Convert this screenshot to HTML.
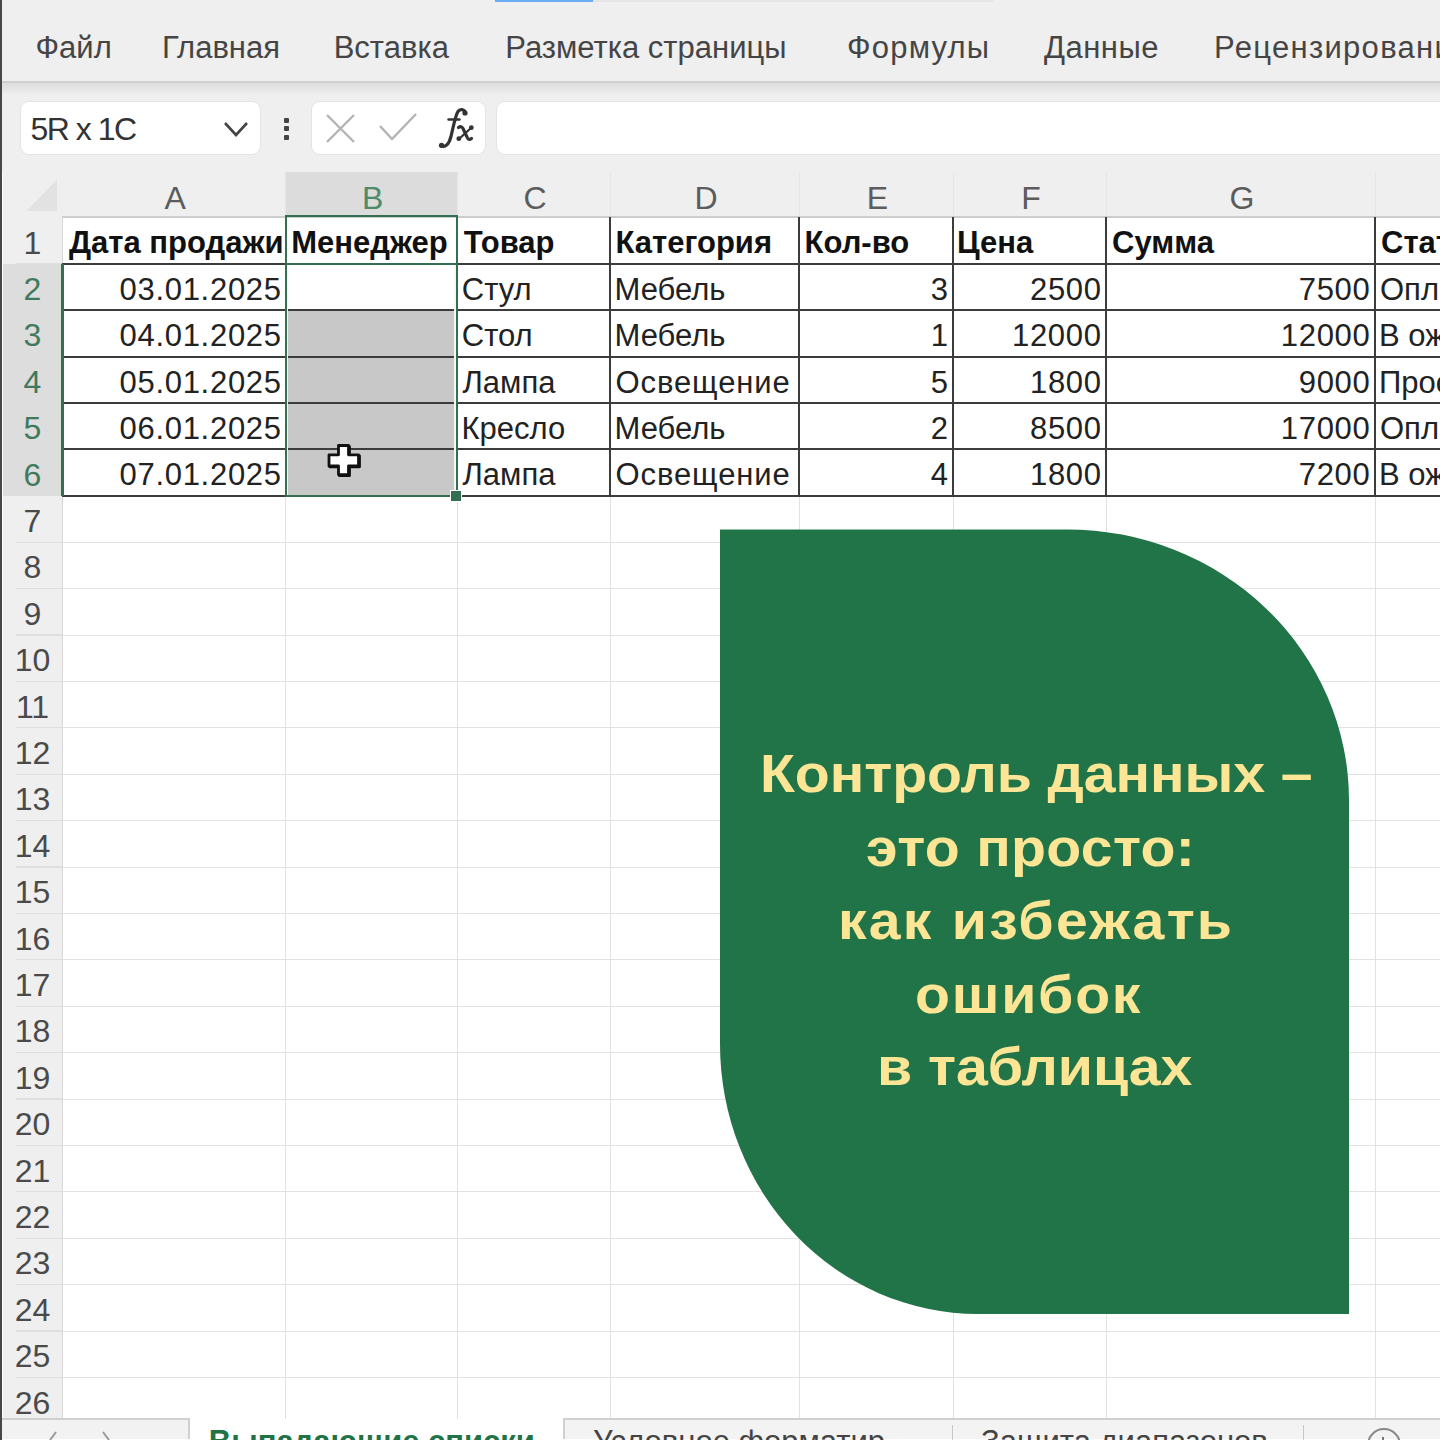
<!DOCTYPE html><html><head><meta charset="utf-8"><style>
*{margin:0;padding:0;box-sizing:border-box}
html,body{width:1440px;height:1440px;overflow:hidden;background:#fff;font-family:"Liberation Sans", sans-serif}
.a{position:absolute}
.t{position:absolute;white-space:nowrap;line-height:1}
</style></head><body>
<div class="a" style="left:0;top:0;width:1440px;height:172px;background:#efefef"></div>
<div class="a" style="left:593px;top:0;width:400px;height:2.2px;background:#e5e5e5"></div>
<div class="a" style="left:495px;top:0;width:98px;height:2.4px;background:#68adf5"></div>
<div class="a" style="left:0;top:81px;width:1440px;height:2px;background:#d0d0d0"></div>
<div class="a" style="left:0;top:83px;width:1440px;height:12px;background:linear-gradient(#dcdcdc,#efefef)"></div>
<div class="t" style="left:35.50px;top:31.95px;font-size:31px;font-weight:400;color:#454545;letter-spacing:0px;">Файл</div>
<div class="t" style="left:162.00px;top:31.95px;font-size:31px;font-weight:400;color:#454545;letter-spacing:0px;">Главная</div>
<div class="t" style="left:333.70px;top:31.95px;font-size:31px;font-weight:400;color:#454545;letter-spacing:0px;">Вставка</div>
<div class="t" style="left:505.30px;top:31.95px;font-size:31px;font-weight:400;color:#454545;letter-spacing:0px;">Разметка страницы</div>
<div class="t" style="left:847.00px;top:31.95px;font-size:31px;font-weight:400;color:#454545;letter-spacing:1.2px;">Формулы</div>
<div class="t" style="left:1044.00px;top:31.95px;font-size:31px;font-weight:400;color:#454545;letter-spacing:0.5px;">Данные</div>
<div class="t" style="left:1214.10px;top:31.95px;font-size:31px;font-weight:400;color:#454545;letter-spacing:1.3px;">Рецензирование</div>
<div class="a" style="left:21px;top:102px;width:239px;height:52px;background:#fff;border-radius:8px;box-shadow:0 0 0 1px #e4e4e4"></div>
<div class="t" style="left:30.50px;top:113.31px;font-size:32px;font-weight:400;color:#333;letter-spacing:-1.5px;">5R x 1C</div>
<svg class="a" style="left:220px;top:115px" width="32" height="28"><path d="M5 8 L16 20 L27 8" fill="none" stroke="#444" stroke-width="2.6"/></svg>
<div class="a" style="left:284px;top:117.5px;width:5px;height:5px;background:#444;border-radius:1px"></div>
<div class="a" style="left:284px;top:126.0px;width:5px;height:5px;background:#444;border-radius:1px"></div>
<div class="a" style="left:284px;top:134.5px;width:5px;height:5px;background:#444;border-radius:1px"></div>
<div class="a" style="left:312px;top:102px;width:173px;height:52px;background:#fff;border-radius:8px;box-shadow:0 0 0 1px #e4e4e4"></div>
<svg class="a" style="left:320px;top:108px" width="160" height="44"><path d="M7 7 L34 34 M34 7 L7 34" stroke="#b4b4b4" stroke-width="2.4" fill="none"/><path d="M60 18 L72 31 L96 6" stroke="#b4b4b4" stroke-width="2.4" fill="none"/></svg>
<svg class="a" style="left:430px;top:100px" width="56" height="54"><g fill="none" stroke="#333" stroke-linecap="round"><path d="M35.5 12.5 C34 9 30 8.5 28 11.5 C25.5 15 23 28 21 36.5 C19 44 16 47.5 11 46" stroke-width="3.2"/><path d="M18.5 19.5 H29.5" stroke-width="2.4"/><path d="M28.5 27.5 C30.5 26 32 26.5 33 28.5 L37 37 C38 39.5 39.5 40 41.5 38.5" stroke-width="3.2"/><path d="M41.5 27.5 L29 39" stroke-width="2.2"/></g><g fill="#333"><circle cx="35" cy="13" r="2.6"/><circle cx="11.5" cy="45.3" r="2.6"/><circle cx="41.3" cy="27.7" r="2.4"/><circle cx="28.8" cy="38.7" r="2.4"/></g></svg>
<div class="a" style="left:497px;top:102px;width:980px;height:52px;background:#fff;border-radius:8px;box-shadow:0 0 0 1px #e4e4e4"></div>
<div class="a" style="left:3px;top:172px;width:1437px;height:45.4px;background:#efefef"></div>
<div class="a" style="left:3px;top:217px;width:59.5px;height:1223px;background:#efefef"></div>
<div class="a" style="left:285.5px;top:172px;width:171.5px;height:45px;background:#dcdcdc"></div>
<div class="a" style="left:3px;top:263.8px;width:59.5px;height:232.0px;background:#dddddd"></div>
<svg class="a" style="left:20px;top:178px" width="40" height="36"><path d="M37 1.5 L37 33 L6.5 33 Z" fill="#e2e2e2"/></svg>
<div class="a" style="left:285.0px;top:172px;width:1px;height:45px;background:#e6e6e6"></div>
<div class="a" style="left:456.5px;top:172px;width:1px;height:45px;background:#e6e6e6"></div>
<div class="a" style="left:609.5px;top:172px;width:1px;height:45px;background:#e6e6e6"></div>
<div class="a" style="left:798.5px;top:172px;width:1px;height:45px;background:#e6e6e6"></div>
<div class="a" style="left:952.5px;top:172px;width:1px;height:45px;background:#e6e6e6"></div>
<div class="a" style="left:1105.5px;top:172px;width:1px;height:45px;background:#e6e6e6"></div>
<div class="a" style="left:1374.5px;top:172px;width:1px;height:45px;background:#e6e6e6"></div>
<div class="a" style="left:62px;top:216.2px;width:1378px;height:1.8px;background:#cdcdcd"></div>
<div class="a" style="left:61.5px;top:217px;width:1.5px;height:1223px;background:#d6d6d6"></div>
<div class="a" style="left:62px;top:263.3px;width:1378px;height:1px;background:#e2e2e2"></div>
<div class="a" style="left:16px;top:263.2px;width:46px;height:1.2px;background:#dedede"></div>
<div class="a" style="left:62px;top:309.7px;width:1378px;height:1px;background:#e2e2e2"></div>
<div class="a" style="left:16px;top:309.59999999999997px;width:46px;height:1.2px;background:#dedede"></div>
<div class="a" style="left:62px;top:356.1px;width:1378px;height:1px;background:#e2e2e2"></div>
<div class="a" style="left:16px;top:356.0px;width:46px;height:1.2px;background:#dedede"></div>
<div class="a" style="left:62px;top:402.5px;width:1378px;height:1px;background:#e2e2e2"></div>
<div class="a" style="left:16px;top:402.4px;width:46px;height:1.2px;background:#dedede"></div>
<div class="a" style="left:62px;top:448.9px;width:1378px;height:1px;background:#e2e2e2"></div>
<div class="a" style="left:16px;top:448.79999999999995px;width:46px;height:1.2px;background:#dedede"></div>
<div class="a" style="left:62px;top:495.29999999999995px;width:1378px;height:1px;background:#e2e2e2"></div>
<div class="a" style="left:16px;top:495.19999999999993px;width:46px;height:1.2px;background:#dedede"></div>
<div class="a" style="left:62px;top:541.7px;width:1378px;height:1px;background:#e2e2e2"></div>
<div class="a" style="left:16px;top:541.6px;width:46px;height:1.2px;background:#dedede"></div>
<div class="a" style="left:62px;top:588.1px;width:1378px;height:1px;background:#e2e2e2"></div>
<div class="a" style="left:16px;top:588.0px;width:46px;height:1.2px;background:#dedede"></div>
<div class="a" style="left:62px;top:634.5px;width:1378px;height:1px;background:#e2e2e2"></div>
<div class="a" style="left:16px;top:634.4px;width:46px;height:1.2px;background:#dedede"></div>
<div class="a" style="left:62px;top:680.9px;width:1378px;height:1px;background:#e2e2e2"></div>
<div class="a" style="left:16px;top:680.8px;width:46px;height:1.2px;background:#dedede"></div>
<div class="a" style="left:62px;top:727.3px;width:1378px;height:1px;background:#e2e2e2"></div>
<div class="a" style="left:16px;top:727.1999999999999px;width:46px;height:1.2px;background:#dedede"></div>
<div class="a" style="left:62px;top:773.6999999999999px;width:1378px;height:1px;background:#e2e2e2"></div>
<div class="a" style="left:16px;top:773.5999999999999px;width:46px;height:1.2px;background:#dedede"></div>
<div class="a" style="left:62px;top:820.0999999999999px;width:1378px;height:1px;background:#e2e2e2"></div>
<div class="a" style="left:16px;top:819.9999999999999px;width:46px;height:1.2px;background:#dedede"></div>
<div class="a" style="left:62px;top:866.5px;width:1378px;height:1px;background:#e2e2e2"></div>
<div class="a" style="left:16px;top:866.4px;width:46px;height:1.2px;background:#dedede"></div>
<div class="a" style="left:62px;top:912.9px;width:1378px;height:1px;background:#e2e2e2"></div>
<div class="a" style="left:16px;top:912.8px;width:46px;height:1.2px;background:#dedede"></div>
<div class="a" style="left:62px;top:959.3px;width:1378px;height:1px;background:#e2e2e2"></div>
<div class="a" style="left:16px;top:959.1999999999999px;width:46px;height:1.2px;background:#dedede"></div>
<div class="a" style="left:62px;top:1005.6999999999999px;width:1378px;height:1px;background:#e2e2e2"></div>
<div class="a" style="left:16px;top:1005.5999999999999px;width:46px;height:1.2px;background:#dedede"></div>
<div class="a" style="left:62px;top:1052.1px;width:1378px;height:1px;background:#e2e2e2"></div>
<div class="a" style="left:16px;top:1052.0px;width:46px;height:1.2px;background:#dedede"></div>
<div class="a" style="left:62px;top:1098.5px;width:1378px;height:1px;background:#e2e2e2"></div>
<div class="a" style="left:16px;top:1098.4px;width:46px;height:1.2px;background:#dedede"></div>
<div class="a" style="left:62px;top:1144.9px;width:1378px;height:1px;background:#e2e2e2"></div>
<div class="a" style="left:16px;top:1144.8000000000002px;width:46px;height:1.2px;background:#dedede"></div>
<div class="a" style="left:62px;top:1191.3px;width:1378px;height:1px;background:#e2e2e2"></div>
<div class="a" style="left:16px;top:1191.2px;width:46px;height:1.2px;background:#dedede"></div>
<div class="a" style="left:62px;top:1237.7px;width:1378px;height:1px;background:#e2e2e2"></div>
<div class="a" style="left:16px;top:1237.6000000000001px;width:46px;height:1.2px;background:#dedede"></div>
<div class="a" style="left:62px;top:1284.1000000000001px;width:1378px;height:1px;background:#e2e2e2"></div>
<div class="a" style="left:16px;top:1284.0000000000002px;width:46px;height:1.2px;background:#dedede"></div>
<div class="a" style="left:62px;top:1330.5px;width:1378px;height:1px;background:#e2e2e2"></div>
<div class="a" style="left:16px;top:1330.4px;width:46px;height:1.2px;background:#dedede"></div>
<div class="a" style="left:62px;top:1376.9px;width:1378px;height:1px;background:#e2e2e2"></div>
<div class="a" style="left:16px;top:1376.8000000000002px;width:46px;height:1.2px;background:#dedede"></div>
<div class="a" style="left:62px;top:1423.3px;width:1378px;height:1px;background:#e2e2e2"></div>
<div class="a" style="left:16px;top:1423.2px;width:46px;height:1.2px;background:#dedede"></div>
<div class="a" style="left:285.0px;top:217px;width:1px;height:1223px;background:#e2e2e2"></div>
<div class="a" style="left:456.5px;top:217px;width:1px;height:1223px;background:#e2e2e2"></div>
<div class="a" style="left:609.5px;top:217px;width:1px;height:1223px;background:#e2e2e2"></div>
<div class="a" style="left:798.5px;top:217px;width:1px;height:1223px;background:#e2e2e2"></div>
<div class="a" style="left:952.5px;top:217px;width:1px;height:1223px;background:#e2e2e2"></div>
<div class="a" style="left:1105.5px;top:217px;width:1px;height:1223px;background:#e2e2e2"></div>
<div class="a" style="left:1374.5px;top:217px;width:1px;height:1223px;background:#e2e2e2"></div>
<div class="t" style="left:63.5px;width:223.5px;text-align:center;top:182.41px;font-size:32px;color:#5c5c5c">A</div>
<div class="t" style="left:287.0px;width:171.5px;text-align:center;top:182.41px;font-size:32px;color:#4f8a6a">B</div>
<div class="t" style="left:458.5px;width:153px;text-align:center;top:182.41px;font-size:32px;color:#5c5c5c">C</div>
<div class="t" style="left:611.5px;width:189px;text-align:center;top:182.41px;font-size:32px;color:#5c5c5c">D</div>
<div class="t" style="left:800.5px;width:154px;text-align:center;top:182.41px;font-size:32px;color:#5c5c5c">E</div>
<div class="t" style="left:954.5px;width:153px;text-align:center;top:182.41px;font-size:32px;color:#5c5c5c">F</div>
<div class="t" style="left:1107.5px;width:269px;text-align:center;top:182.41px;font-size:32px;color:#5c5c5c">G</div>
<div class="t" style="left:1376.5px;width:225px;text-align:center;top:182.41px;font-size:32px;color:#5c5c5c">H</div>
<div class="t" style="left:3px;width:59px;text-align:center;top:226.51px;font-size:32px;color:#4a4a4a">1</div>
<div class="t" style="left:3px;width:59px;text-align:center;top:272.91px;font-size:32px;color:#3f7a5c">2</div>
<div class="t" style="left:3px;width:59px;text-align:center;top:319.31px;font-size:32px;color:#3f7a5c">3</div>
<div class="t" style="left:3px;width:59px;text-align:center;top:365.71px;font-size:32px;color:#3f7a5c">4</div>
<div class="t" style="left:3px;width:59px;text-align:center;top:412.11px;font-size:32px;color:#3f7a5c">5</div>
<div class="t" style="left:3px;width:59px;text-align:center;top:458.51px;font-size:32px;color:#3f7a5c">6</div>
<div class="t" style="left:3px;width:59px;text-align:center;top:504.91px;font-size:32px;color:#4a4a4a">7</div>
<div class="t" style="left:3px;width:59px;text-align:center;top:551.31px;font-size:32px;color:#4a4a4a">8</div>
<div class="t" style="left:3px;width:59px;text-align:center;top:597.71px;font-size:32px;color:#4a4a4a">9</div>
<div class="t" style="left:3px;width:59px;text-align:center;top:644.11px;font-size:32px;color:#4a4a4a">10</div>
<div class="t" style="left:3px;width:59px;text-align:center;top:690.51px;font-size:32px;color:#4a4a4a">11</div>
<div class="t" style="left:3px;width:59px;text-align:center;top:736.91px;font-size:32px;color:#4a4a4a">12</div>
<div class="t" style="left:3px;width:59px;text-align:center;top:783.31px;font-size:32px;color:#4a4a4a">13</div>
<div class="t" style="left:3px;width:59px;text-align:center;top:829.71px;font-size:32px;color:#4a4a4a">14</div>
<div class="t" style="left:3px;width:59px;text-align:center;top:876.11px;font-size:32px;color:#4a4a4a">15</div>
<div class="t" style="left:3px;width:59px;text-align:center;top:922.51px;font-size:32px;color:#4a4a4a">16</div>
<div class="t" style="left:3px;width:59px;text-align:center;top:968.91px;font-size:32px;color:#4a4a4a">17</div>
<div class="t" style="left:3px;width:59px;text-align:center;top:1015.31px;font-size:32px;color:#4a4a4a">18</div>
<div class="t" style="left:3px;width:59px;text-align:center;top:1061.71px;font-size:32px;color:#4a4a4a">19</div>
<div class="t" style="left:3px;width:59px;text-align:center;top:1108.11px;font-size:32px;color:#4a4a4a">20</div>
<div class="t" style="left:3px;width:59px;text-align:center;top:1154.51px;font-size:32px;color:#4a4a4a">21</div>
<div class="t" style="left:3px;width:59px;text-align:center;top:1200.91px;font-size:32px;color:#4a4a4a">22</div>
<div class="t" style="left:3px;width:59px;text-align:center;top:1247.31px;font-size:32px;color:#4a4a4a">23</div>
<div class="t" style="left:3px;width:59px;text-align:center;top:1293.71px;font-size:32px;color:#4a4a4a">24</div>
<div class="t" style="left:3px;width:59px;text-align:center;top:1340.11px;font-size:32px;color:#4a4a4a">25</div>
<div class="t" style="left:3px;width:59px;text-align:center;top:1386.51px;font-size:32px;color:#4a4a4a">26</div>
<div class="a" style="left:287.5px;top:310.2px;width:168px;height:185.6px;background:#c8c8c8"></div>
<div class="a" style="left:62px;top:262.8px;width:1378px;height:2px;background:#3c3c3c"></div>
<div class="a" style="left:62px;top:309.2px;width:1378px;height:2px;background:#3c3c3c"></div>
<div class="a" style="left:62px;top:355.6px;width:1378px;height:2px;background:#3c3c3c"></div>
<div class="a" style="left:62px;top:402.0px;width:1378px;height:2px;background:#3c3c3c"></div>
<div class="a" style="left:62px;top:448.4px;width:1378px;height:2px;background:#3c3c3c"></div>
<div class="a" style="left:62px;top:494.79999999999995px;width:1378px;height:2px;background:#3c3c3c"></div>
<div class="a" style="left:284.5px;top:217px;width:2px;height:279.79999999999995px;background:#3c3c3c"></div>
<div class="a" style="left:456px;top:217px;width:2px;height:279.79999999999995px;background:#3c3c3c"></div>
<div class="a" style="left:609px;top:217px;width:2px;height:279.79999999999995px;background:#3c3c3c"></div>
<div class="a" style="left:798px;top:217px;width:2px;height:279.79999999999995px;background:#3c3c3c"></div>
<div class="a" style="left:952px;top:217px;width:2px;height:279.79999999999995px;background:#3c3c3c"></div>
<div class="a" style="left:1105px;top:217px;width:2px;height:279.79999999999995px;background:#3c3c3c"></div>
<div class="a" style="left:1374px;top:217px;width:2px;height:279.79999999999995px;background:#3c3c3c"></div>
<div class="t" style="left:69.00px;top:227.45px;font-size:31px;font-weight:700;color:#111;letter-spacing:0px;">Дата продажи</div>
<div class="t" style="left:291.30px;top:227.45px;font-size:31px;font-weight:700;color:#111;letter-spacing:0px;">Менеджер</div>
<div class="t" style="left:463.75px;top:227.45px;font-size:31px;font-weight:700;color:#111;letter-spacing:0px;">Товар</div>
<div class="t" style="left:615.50px;top:227.45px;font-size:31px;font-weight:700;color:#111;letter-spacing:0px;">Категория</div>
<div class="t" style="left:804.60px;top:227.45px;font-size:31px;font-weight:700;color:#111;letter-spacing:0px;">Кол-во</div>
<div class="t" style="left:957.00px;top:227.45px;font-size:31px;font-weight:700;color:#111;letter-spacing:0px;">Цена</div>
<div class="t" style="left:1112.00px;top:227.45px;font-size:31px;font-weight:700;color:#111;letter-spacing:0px;">Сумма</div>
<div class="t" style="left:1381.00px;top:227.45px;font-size:31px;font-weight:700;color:#111;letter-spacing:0px;">Статус</div>
<div class="t" style="right:1158.30px;top:273.85px;font-size:31px;font-weight:400;color:#222;letter-spacing:0.7px">03.01.2025</div>
<div class="t" style="left:461.75px;top:273.85px;font-size:31px;font-weight:400;color:#222;letter-spacing:0px;">Стул</div>
<div class="t" style="left:614.50px;top:273.85px;font-size:31px;font-weight:400;color:#222;letter-spacing:0px;">Мебель</div>
<div class="t" style="right:491.30px;top:273.85px;font-size:31px;font-weight:400;color:#222;letter-spacing:0.7px">3</div>
<div class="t" style="right:338.30px;top:273.85px;font-size:31px;font-weight:400;color:#222;letter-spacing:0.7px">2500</div>
<div class="t" style="right:69.50px;top:273.85px;font-size:31px;font-weight:400;color:#222;letter-spacing:0.7px">7500</div>
<div class="t" style="left:1380.00px;top:273.85px;font-size:31px;font-weight:400;color:#222;letter-spacing:0px;">Оплачено</div>
<div class="t" style="right:1158.30px;top:320.25px;font-size:31px;font-weight:400;color:#222;letter-spacing:0.7px">04.01.2025</div>
<div class="t" style="left:461.75px;top:320.25px;font-size:31px;font-weight:400;color:#222;letter-spacing:0px;">Стол</div>
<div class="t" style="left:614.50px;top:320.25px;font-size:31px;font-weight:400;color:#222;letter-spacing:0px;">Мебель</div>
<div class="t" style="right:491.30px;top:320.25px;font-size:31px;font-weight:400;color:#222;letter-spacing:0.7px">1</div>
<div class="t" style="right:338.30px;top:320.25px;font-size:31px;font-weight:400;color:#222;letter-spacing:0.7px">12000</div>
<div class="t" style="right:69.50px;top:320.25px;font-size:31px;font-weight:400;color:#222;letter-spacing:0.7px">12000</div>
<div class="t" style="left:1379.00px;top:320.25px;font-size:31px;font-weight:400;color:#222;letter-spacing:0px;">В ожидании</div>
<div class="t" style="right:1158.30px;top:366.65px;font-size:31px;font-weight:400;color:#222;letter-spacing:0.7px">05.01.2025</div>
<div class="t" style="left:462.50px;top:366.65px;font-size:31px;font-weight:400;color:#222;letter-spacing:0px;">Лампа</div>
<div class="t" style="left:615.50px;top:366.65px;font-size:31px;font-weight:400;color:#222;letter-spacing:0.9px;">Освещение</div>
<div class="t" style="right:491.30px;top:366.65px;font-size:31px;font-weight:400;color:#222;letter-spacing:0.7px">5</div>
<div class="t" style="right:338.30px;top:366.65px;font-size:31px;font-weight:400;color:#222;letter-spacing:0.7px">1800</div>
<div class="t" style="right:69.50px;top:366.65px;font-size:31px;font-weight:400;color:#222;letter-spacing:0.7px">9000</div>
<div class="t" style="left:1379.00px;top:366.65px;font-size:31px;font-weight:400;color:#222;letter-spacing:0px;">Просрочено</div>
<div class="t" style="right:1158.30px;top:413.05px;font-size:31px;font-weight:400;color:#222;letter-spacing:0.7px">06.01.2025</div>
<div class="t" style="left:461.50px;top:413.05px;font-size:31px;font-weight:400;color:#222;letter-spacing:0px;">Кресло</div>
<div class="t" style="left:614.50px;top:413.05px;font-size:31px;font-weight:400;color:#222;letter-spacing:0px;">Мебель</div>
<div class="t" style="right:491.30px;top:413.05px;font-size:31px;font-weight:400;color:#222;letter-spacing:0.7px">2</div>
<div class="t" style="right:338.30px;top:413.05px;font-size:31px;font-weight:400;color:#222;letter-spacing:0.7px">8500</div>
<div class="t" style="right:69.50px;top:413.05px;font-size:31px;font-weight:400;color:#222;letter-spacing:0.7px">17000</div>
<div class="t" style="left:1380.00px;top:413.05px;font-size:31px;font-weight:400;color:#222;letter-spacing:0px;">Оплачено</div>
<div class="t" style="right:1158.30px;top:459.45px;font-size:31px;font-weight:400;color:#222;letter-spacing:0.7px">07.01.2025</div>
<div class="t" style="left:462.50px;top:459.45px;font-size:31px;font-weight:400;color:#222;letter-spacing:0px;">Лампа</div>
<div class="t" style="left:615.50px;top:459.45px;font-size:31px;font-weight:400;color:#222;letter-spacing:0.9px;">Освещение</div>
<div class="t" style="right:491.30px;top:459.45px;font-size:31px;font-weight:400;color:#222;letter-spacing:0.7px">4</div>
<div class="t" style="right:338.30px;top:459.45px;font-size:31px;font-weight:400;color:#222;letter-spacing:0.7px">1800</div>
<div class="t" style="right:69.50px;top:459.45px;font-size:31px;font-weight:400;color:#222;letter-spacing:0.7px">7200</div>
<div class="t" style="left:1379.00px;top:459.45px;font-size:31px;font-weight:400;color:#222;letter-spacing:0px;">В ожидании</div>
<div class="a" style="left:61px;top:263.8px;width:2.5px;height:232.0px;background:#336f52"></div>
<div class="a" style="left:284.5px;top:215.3px;width:173px;height:281.49999999999994px;border:2.2px solid #336f52"></div>
<div class="a" style="left:284.5px;top:262.6px;width:173px;height:2.4px;background:#336f52"></div>
<div class="a" style="left:286.6px;top:265.0px;width:1.8px;height:229.79999999999995px;background:#f4f8f5"></div>
<div class="a" style="left:454.2px;top:265.0px;width:1.8px;height:229.79999999999995px;background:#f4f8f5"></div>
<div class="a" style="left:451px;top:491px;width:9.5px;height:9.5px;background:#336f52;box-shadow:0 0 0 1px #fff"></div>
<svg class="a" style="left:324.4px;top:441.1px" width="40" height="40"><g stroke-linejoin="round"><path d="M14.5 4.5 H24.5 V13.8 H34.5 V24.9 H24.5 V33.6 H14.5 V24.9 H5 V13.8 H14.5 Z" fill="#111" stroke="#111" stroke-width="3" transform="translate(0.9,0.9)"/><path d="M14.5 4.5 H24.5 V13.8 H34.5 V24.9 H24.5 V33.6 H14.5 V24.9 H5 V13.8 H14.5 Z" fill="#fff" stroke="#111" stroke-width="2.8"/></g></svg>
<div class="a" style="left:0;top:1419px;width:1440px;height:21px;background:#fff"></div>
<div class="a" style="left:0;top:1418px;width:190px;height:21px;background:#f2f2f2;border-top:2.5px solid #d0d0d0;border-right:2px solid #d0d0d0"></div>
<div class="a" style="left:563px;top:1418px;width:877px;height:21px;background:#f3f3f3;border-top:2.5px solid #d0d0d0;border-left:2px solid #d0d0d0"></div>
<div class="t" style="left:208.80px;top:1426.05px;font-size:31px;font-weight:700;color:#217346;letter-spacing:0px;">Выпадающие списки</div>
<div class="t" style="left:593.00px;top:1426.05px;font-size:31px;font-weight:400;color:#444;letter-spacing:0px;">Условное форматир...</div>
<div class="a" style="left:951.5px;top:1425px;width:1.5px;height:15px;background:#c8c8c8"></div>
<div class="t" style="left:981.00px;top:1426.05px;font-size:31px;font-weight:400;color:#444;letter-spacing:0px;">Защита диапазонов</div>
<div class="a" style="left:1302.5px;top:1425px;width:1.5px;height:15px;background:#c8c8c8"></div>
<div class="a" style="left:1366.5px;top:1428.3px;width:34px;height:34px;border:2px solid #888;border-radius:50%"></div>
<div class="a" style="left:1382.3px;top:1437px;width:2px;height:10px;background:#777"></div>
<svg class="a" style="left:40px;top:1428px" width="90" height="12"><path d="M16 4 L10 12 M63 4 L69 12" stroke="#999" stroke-width="2" fill="none"/></svg>
<div class="a" style="left:0;top:0;width:2.3px;height:1440px;background:#474747"></div>
<svg class="a" style="left:0;top:0" width="1440" height="1440"><path d="M720 529.4 H1067 A282 271 0 0 1 1349 800 V1314 H978 A258 270 0 0 1 720 1044 Z" fill="#217448"/></svg>
<div class="t" style="left:759.79px;top:746.28px;font-size:54px;font-weight:700;color:#fde596;letter-spacing:-0.09px;transform:scaleX(1.06);transform-origin:0 0">Контроль данных –</div>
<div class="t" style="left:865.79px;top:820.08px;font-size:54px;font-weight:700;color:#fde596;letter-spacing:0.28px;transform:scaleX(1.06);transform-origin:0 0">это просто:</div>
<div class="t" style="left:838.29px;top:893.03px;font-size:54px;font-weight:700;color:#fde596;letter-spacing:2.06px;transform:scaleX(1.06);transform-origin:0 0">как избежать</div>
<div class="t" style="left:914.79px;top:966.78px;font-size:54px;font-weight:700;color:#fde596;letter-spacing:1.63px;transform:scaleX(1.06);transform-origin:0 0">ошибок</div>
<div class="t" style="left:877.29px;top:1039.28px;font-size:54px;font-weight:700;color:#fde596;letter-spacing:-0.06px;transform:scaleX(1.06);transform-origin:0 0">в таблицах</div>
</body></html>
